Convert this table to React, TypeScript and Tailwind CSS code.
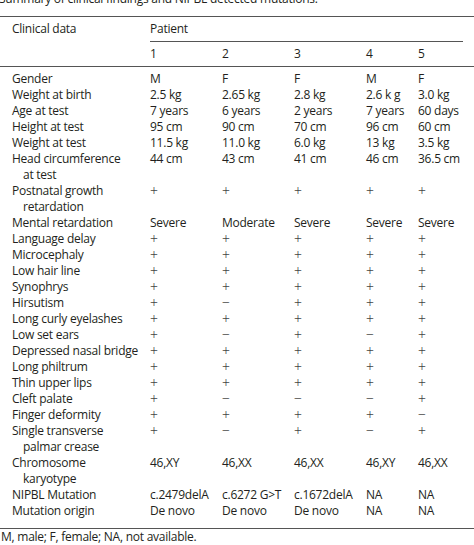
import React from "react";

type Row = { label: string[]; v: string[] };

const rows: Row[] = [
  { label: ["Gender"], v: ["M", "F", "F", "M", "F"] },
  { label: ["Weight at birth"], v: ["2.5 kg", "2.65 kg", "2.8 kg", "2.6 k g", "3.0 kg"] },
  { label: ["Age at test"], v: ["7 years", "6 years", "2 years", "7 years", "60 days"] },
  { label: ["Height at test"], v: ["95 cm", "90 cm", "70 cm", "96 cm", "60 cm"] },
  { label: ["Weight at test"], v: ["11.5 kg", "11.0 kg", "6.0 kg", "13 kg", "3.5 kg"] },
  { label: ["Head circumference", "at test"], v: ["44 cm", "43 cm", "41 cm", "46 cm", "36.5 cm"] },
  { label: ["Postnatal growth", "retardation"], v: ["+", "+", "+", "+", "+"] },
  { label: ["Mental retardation"], v: ["Severe", "Moderate", "Severe", "Severe", "Severe"] },
  { label: ["Language delay"], v: ["+", "+", "+", "+", "+"] },
  { label: ["Microcephaly"], v: ["+", "+", "+", "+", "+"] },
  { label: ["Low hair line"], v: ["+", "+", "+", "+", "+"] },
  { label: ["Synophrys"], v: ["+", "+", "+", "+", "+"] },
  { label: ["Hirsutism"], v: ["+", "−", "+", "+", "+"] },
  { label: ["Long curly eyelashes"], v: ["+", "+", "+", "+", "+"] },
  { label: ["Low set ears"], v: ["+", "−", "+", "−", "+"] },
  { label: ["Depressed nasal bridge"], v: ["+", "+", "+", "+", "+"] },
  { label: ["Long philtrum"], v: ["+", "+", "+", "+", "+"] },
  { label: ["Thin upper lips"], v: ["+", "+", "+", "+", "+"] },
  { label: ["Cleft palate"], v: ["+", "−", "−", "−", "+"] },
  { label: ["Finger deformity"], v: ["+", "+", "+", "+", "−"] },
  { label: ["Single transverse", "palmar crease"], v: ["+", "−", "+", "−", "+"] },
  { label: ["Chromosome", "karyotype"], v: ["46,XY", "46,XX", "46,XX", "46,XY", "46,XX"] },
  { label: ["NIPBL Mutation"], v: ["c.2479delA", "c.6272 G>T", "c.1672delA", "NA", "NA"] },
  { label: ["Mutation origin"], v: ["De novo", "De novo", "De novo", "NA", "NA"] },
];

const grid = "grid grid-cols-[150px_72px_72px_72px_52px_56px]";

function Cell({ s }: { s: string }) {
  const sym = s === "+" || s === "−";
  return (
    <div
      className={
        sym
          ? "text-[14px] leading-[16px] tracking-normal text-[#444]"
          : "whitespace-nowrap"
      }
      style={sym ? { fontFamily: '"Liberation Serif", serif' } : undefined}
    >
      {s}
    </div>
  );
}

export default function App() {
  return (
    <div
      className="w-[474px] h-[545px] overflow-hidden bg-white text-[#231f20] text-[12px] leading-[16px] tracking-[-0.25px]"
      style={{ fontFamily: '"Open Sans", "Noto Sans", sans-serif' }}
    >
      <div className="-mt-[9px] mb-[9px] -ml-[1px] whitespace-nowrap">
        Summary of clinical findings and NIPBL detected mutations.
      </div>
      <div className="border-t-[1.5px] border-[#555]" />
      <div className={grid}>
        <div className="pl-[12px] pt-[4px] h-[24px]">Clinical data</div>
        <div className="col-span-5 pt-[4px] h-[24px]">Patient</div>
      </div>
      <div className={grid}>
        <div />
        <div className="col-span-5 mr-[11px] border-t border-[#555]" />
      </div>
      <div className={grid + " h-[24px] pt-[4px]"}>
        <div />
        <div>1</div>
        <div>2</div>
        <div>3</div>
        <div>4</div>
        <div>5</div>
      </div>
      <div className="border-t border-[#555]" />
      <div className="pt-[4px] pb-[9px]">
        {rows.map((r, i) => (
          <div key={i} className={grid}>
            <div className="pl-[12px]">
              {r.label.map((l, j) => (
                <div key={j} className={j > 0 ? "pl-[11px]" : ""}>
                  {l}
                </div>
              ))}
            </div>
            {r.v.map((v, j) => (
              <Cell key={j} s={v} />
            ))}
          </div>
        ))}
      </div>
      <div className="border-t-[1.5px] border-[#555]" />
      <div className="pl-[1px] whitespace-nowrap">M, male; F, female; NA, not available.</div>
    </div>
  );
}
